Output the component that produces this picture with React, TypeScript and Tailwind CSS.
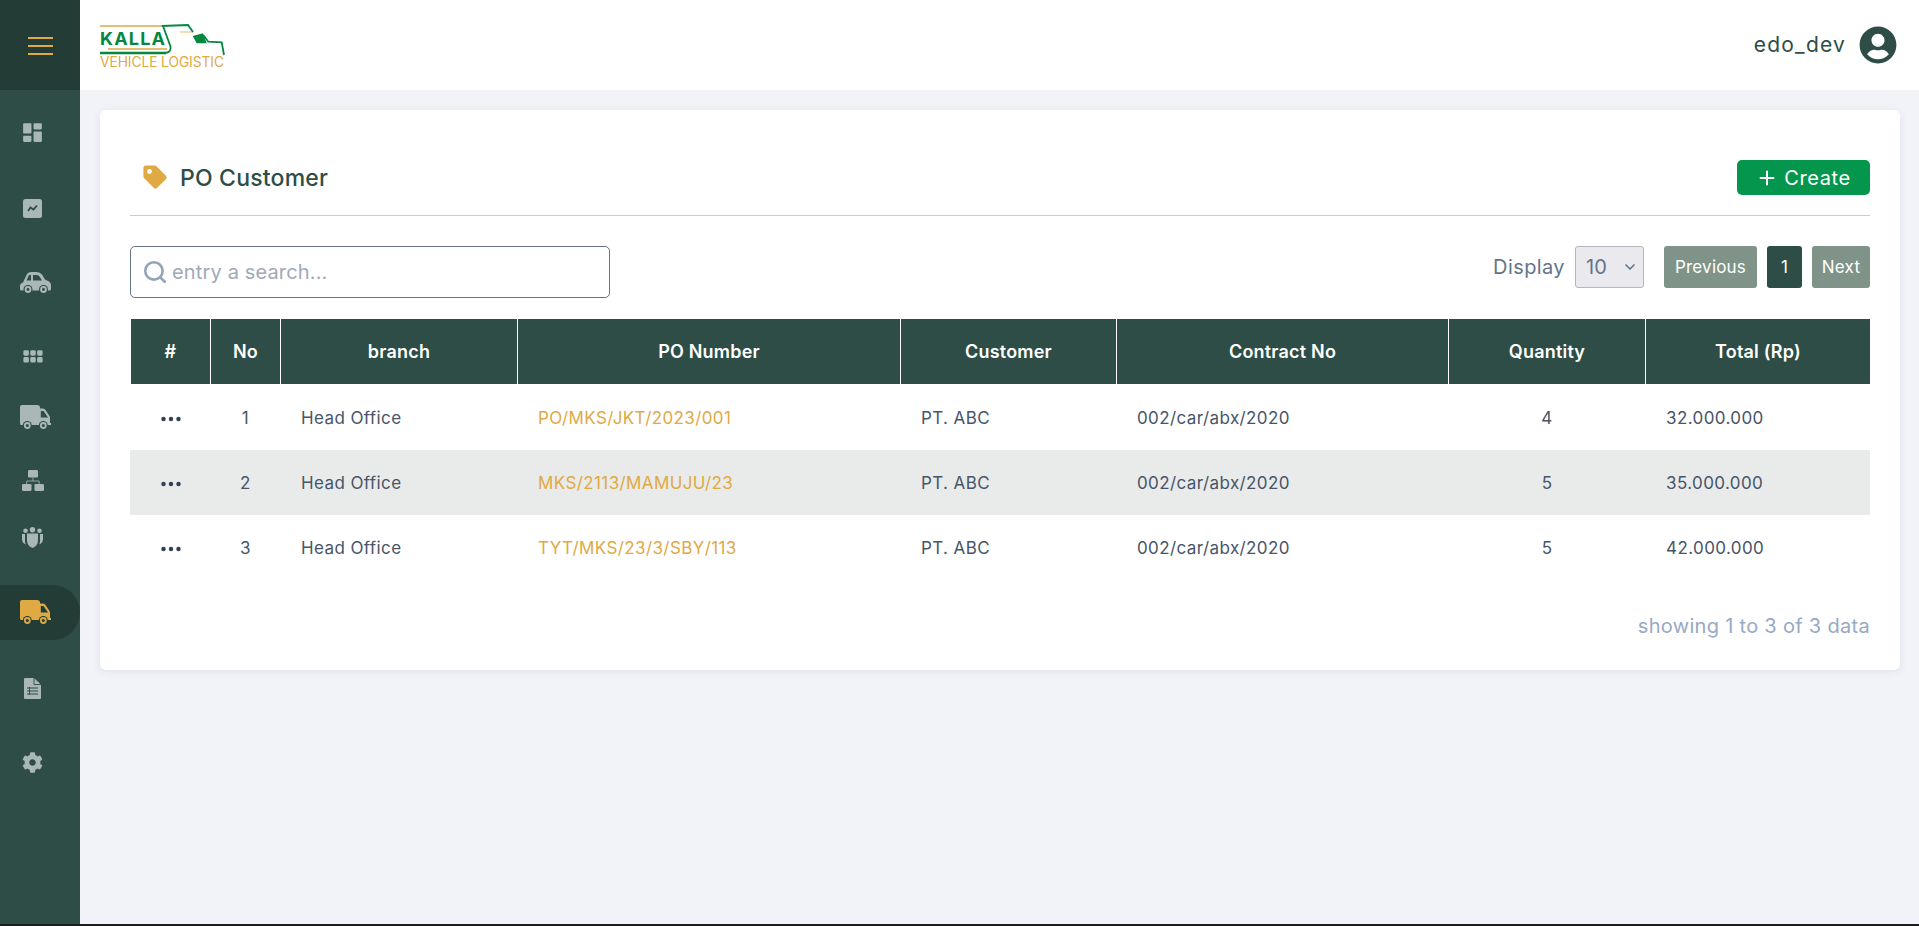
import React from 'react';
import { BiSolidPurchaseTag } from 'react-icons/bi';
import { BsGrid3X2GapFill, BsThreeDots } from 'react-icons/bs';
import { FaCog, FaUserCircle } from 'react-icons/fa';
import { RiDashboardFill } from 'react-icons/ri';
import { ChevronDown, Plus, Search } from 'lucide-react';

/* ---------------- DATA ---------------- */

const rows = [
  { no: 1, branch: 'Head Office', po: 'PO/MKS/JKT/2023/001', customer: 'PT. ABC', contract: '002/car/abx/2020', qty: 4, total: '32.000.000' },
  { no: 2, branch: 'Head Office', po: 'MKS/2113/MAMUJU/23', customer: 'PT. ABC', contract: '002/car/abx/2020', qty: 5, total: '35.000.000' },
  { no: 3, branch: 'Head Office', po: 'TYT/MKS/23/3/SBY/113', customer: 'PT. ABC', contract: '002/car/abx/2020', qty: 5, total: '42.000.000' },
];

const columns = ['#', 'No', 'branch', 'PO Number', 'Customer', 'Contract No', 'Quantity', 'Total (Rp)'];

/* ---------------- ICONS ---------------- */

function ChartIcon() {
  return (
    <svg width="19" height="19" viewBox="0 0 19 19">
      <rect width="19" height="19" rx="2.5" fill="currentColor" />
      <path d="M5 12 L7.5 8.5 L10.5 10.5 L14 6.5" fill="none" stroke="#2d4d46" strokeWidth="1.8" />
    </svg>
  );
}

function CarIcon() {
  return (
    <svg width="31" height="22" viewBox="0 0 31 22">
      <path
        d="M0 14 Q0 11.5 3 10.5 L6.5 3 Q8 0 11.5 0 H16.5 Q20 0 22 2.5 L25 7.5 L29 9.5 Q31 10.5 31 13 V17 Q31 18.5 29.5 18.5 H1.5 Q0 18.5 0 17 Z"
        fill="currentColor"
      />
      <path d="M6.5 8.5 L9 3 H11 V8.5 Z M13 3 H17 Q18.5 3 19.5 4.5 L22 8.5 H13 Z" fill="#2d4d46" />
      <circle cx="8" cy="17.5" r="4.5" fill="#2d4d46" />
      <circle cx="8" cy="17.5" r="3.4" fill="currentColor" />
      <circle cx="8" cy="17.5" r="1.4" fill="#2d4d46" />
      <circle cx="23.5" cy="17.5" r="4.5" fill="#2d4d46" />
      <circle cx="23.5" cy="17.5" r="3.4" fill="currentColor" />
      <circle cx="23.5" cy="17.5" r="1.4" fill="#2d4d46" />
    </svg>
  );
}

function TruckIcon({ bg }: { bg: string }) {
  return (
    <svg width="31" height="25" viewBox="0 0 31 25">
      <path
        d="M2 0 H17 Q20 0 20 2.5 V3.5 H23 Q24.5 3.5 25.5 5 L29.5 11 Q30 12 30 13 V18 H31 V20 H1.5 Q0 20 0 18.5 V2 Q0 0 2 0 Z"
        fill="currentColor"
      />
      <path d="M20.8 6 H23.5 L28 12.5 H20.8 Z" fill={bg} />
      <circle cx="7.3" cy="20.5" r="4.5" fill={bg} />
      <circle cx="7.3" cy="20.5" r="3.4" fill="currentColor" />
      <circle cx="7.3" cy="20.5" r="1.5" fill={bg} />
      <circle cx="23.3" cy="20.5" r="4.5" fill={bg} />
      <circle cx="23.3" cy="20.5" r="3.4" fill="currentColor" />
      <circle cx="23.3" cy="20.5" r="1.5" fill={bg} />
    </svg>
  );
}

function SitemapIcon() {
  return (
    <svg width="22" height="21" viewBox="0 0 22 21">
      <rect x="6" width="10" height="7.5" rx="1.2" fill="currentColor" />
      <rect y="14" width="9.5" height="7" rx="1.2" fill="currentColor" />
      <rect x="12.5" y="14" width="9.5" height="7" rx="1.2" fill="currentColor" />
      <path d="M11 7.5 V11 M4.7 14 V11 H17.2 V14" fill="none" stroke="currentColor" strokeWidth="0.8" />
    </svg>
  );
}

function TeamIcon() {
  return (
    <svg width="21" height="21" viewBox="0 0 21 21">
      <circle cx="3.5" cy="3.7" r="2.3" fill="currentColor" />
      <circle cx="10.5" cy="2.7" r="2.7" fill="currentColor" />
      <circle cx="17.5" cy="3.7" r="2.3" fill="currentColor" />
      <path d="M5 6.5 H16 V13 Q16 19 10.5 21 Q5 19 5 13 Z" fill="currentColor" />
      <path d="M0 7 H3 V15 L3.8 17.5 Q0 16 0 12 Z M21 7 H18 V15 L17.2 17.5 Q21 16 21 12 Z" fill="currentColor" />
    </svg>
  );
}

function FileIcon() {
  return (
    <svg width="17" height="21" viewBox="0 0 17 21">
      <path d="M1 0 H10 L17 6.5 V20 Q17 21 16 21 H1 Q0 21 0 20 V1 Q0 0 1 0 Z" fill="currentColor" />
      <path d="M10 0 V6.5 H17" fill="none" stroke="#2d4d46" strokeWidth="0.9" />
      <path d="M3 10 H14 M3 13 H14 M3 16 H14" stroke="#2d4d46" strokeWidth="1.1" />
      <path d="M5.5 9 V17" stroke="#2d4d46" strokeWidth="0.9" />
    </svg>
  );
}

function Logo() {
  return (
    <svg width="126" height="50" viewBox="0 -2 126 50" className="shrink-0">
      <path d="M0 4 H61" stroke="#dfa944" strokeWidth="1.4" />
      <path d="M8 27 H67" stroke="#dfa944" strokeWidth="1.4" />
      <path d="M80 10 H93" stroke="#dfa944" strokeWidth="0.8" />
      <path
        d="M61.5 4 L88 3 L93 10 M103.3 13 L108.3 19.7 L121.7 20.3 L124 33 M63 4 L70.5 24.5 Q71.5 30.5 65 31 H0"
        fill="none"
        stroke="#05873f"
        strokeWidth="1.8"
      />
      <path d="M0 31 H66" stroke="#05873f" strokeWidth="2.6" />
      <path d="M92.7 14 L103 11.3 L106.7 21.3 L96.7 21.3 Z" fill="#05873f" />
      <text x="0" y="22.5" fontFamily="Inter, sans-serif" fontWeight="700" fontSize="18" textLength="65" fill="#05873f">
        KALLA
      </text>
      <text x="0" y="45" fontFamily="Inter, sans-serif" fontWeight="400" fontSize="13.8" textLength="124" fill="#dfa944">
        VEHICLE LOGISTIC
      </text>
    </svg>
  );
}

const navItems = [
  { icon: <RiDashboardFill size={25} />, className: 'mt-[15px] pr-[15px]' },
  { icon: <ChartIcon />, className: 'mt-[21px] pr-[15px]' },
  { icon: <CarIcon />, className: 'mt-[19px] pr-[10px]' },
  { icon: <BsGrid3X2GapFill size={22} />, className: 'mt-[19px] pr-[15px]' },
  { icon: <TruckIcon bg="#2d4d46" />, className: 'mt-[6px] pr-[10px]' },
  { icon: <SitemapIcon />, className: 'mt-[8px] pr-[15px]' },
  { icon: <TeamIcon />, className: 'mt-[2px] pr-[15px]' },
  { icon: <TruckIcon bg="#233d36" />, className: 'mt-[20px] pr-[10px]', active: true },
  { icon: <FileIcon />, className: 'mt-[21px] pr-[15px]' },
  { icon: <FaCog size={21} />, className: 'mt-[19px] pr-[15px]' },
];

/* ---------------- MAIN ---------------- */

export default function App() {
  return (
    <div className="flex flex-col h-[926px] overflow-hidden bg-[#f1f3f8] font-['Inter',sans-serif]">
      <div className="flex flex-1 min-h-0">
        {/* Sidebar */}
        <aside className="w-[80px] shrink-0 bg-[#2d4d46]">
          <div className="h-[90px] pt-[2px] bg-[#233d36] flex items-center justify-center">
            <div className="w-[25px] flex flex-col gap-[6px]">
              <div className="h-[2px] bg-[#dfa944]" />
              <div className="h-[2px] bg-[#dfa944]" />
              <div className="h-[2px] bg-[#dfa944]" />
            </div>
          </div>
          <nav className="flex flex-col">
            {navItems.map((item, i) => (
              <div
                key={i}
                className={`h-[55px] flex items-center justify-center ${item.className} ${
                  item.active ? 'bg-[#233d36] rounded-r-[28px] text-[#dfa944]' : 'text-[#a9b8b5]'
                }`}
              >
                {item.icon}
              </div>
            ))}
          </nav>
        </aside>

        <div className="flex-1 min-w-0 flex flex-col">
          {/* Header */}
          <header className="h-[90px] bg-white flex items-center justify-between pl-[20px] pr-[22px]">
            <Logo />
            <div className="flex items-center gap-[13px]">
              <span className="text-[21px] tracking-[1.2px] text-[#2d4d46]">edo_dev</span>
              <FaUserCircle size={38} className="text-[#2d4d46]" />
            </div>
          </header>

          {/* Card */}
          <main className="pl-[20px] pr-[19px] py-[20px]">
            <div className="h-[560px] bg-white rounded-[6px] shadow-[0_2px_8px_rgba(40,50,80,0.08)] px-[30px] pt-[50px]">
              <div className="flex items-center justify-between h-[35px]">
                <div className="flex items-center gap-[10px] pl-[11px]">
                  <BiSolidPurchaseTag size={29} className="text-[#dfa944]" />
                  <h1 className="pt-[2px] text-[23px] tracking-[0.2px] font-medium text-[#2d4d46]">PO Customer</h1>
                </div>
                <button className="w-[133px] h-[35px] rounded-[5px] bg-[#05964d] text-white text-[20px] tracking-[0.6px] flex items-center justify-center gap-[6px]">
                  <Plus size={22} strokeWidth={2.2} />
                  Create
                </button>
              </div>
              <div className="mt-[20px] h-px bg-[#c9cbcd]" />

              {/* Toolbar */}
              <div className="mt-[30px] flex items-start justify-between">
                <div className="w-[480px] h-[52px] border border-[#64748b] rounded-[5px] flex items-center gap-[4px] pl-[11px]">
                  <Search size={26} strokeWidth={2.4} className="text-[#94a3b8]" />
                  <input
                    placeholder="entry a search..."
                    className="flex-1 outline-none text-[20px] tracking-[0.15px] text-[#475569] placeholder:text-[#a0a9b8]"
                  />
                </div>
                <div className="flex items-center">
                  <span className="text-[20px] tracking-[0.4px] text-[#64748b] mr-[10px]">Display</span>
                  <div className="w-[69px] h-[42px] border border-[#b2b6bd] rounded-[3px] bg-[#e9e9ee] flex items-center justify-between pl-[10px] pr-[5px] text-[20px] text-[#64748b] mr-[20px]">
                    10
                    <ChevronDown size={16} strokeWidth={2.5} />
                  </div>
                  <button className="w-[93px] h-[42px] pt-[1px] rounded-[3px] bg-[#809389] text-white text-[17px] tracking-[0.2px]">Previous</button>
                  <button className="w-[35px] h-[42px] pt-[1px] rounded-[3px] bg-[#2d4d46] text-white text-[17px] mx-[10px]">1</button>
                  <button className="w-[58px] h-[42px] pt-[1px] rounded-[3px] bg-[#809389] text-white text-[17px] tracking-[0.2px]">Next</button>
                </div>
              </div>

              {/* Table */}
              <table className="mt-[21px] w-[1740px] table-fixed border-separate border-spacing-0 text-[17px] tracking-[0.4px] text-[#475569]">
                <colgroup>
                  <col className="w-[80px]" />
                  <col className="w-[70px]" />
                  <col className="w-[237px]" />
                  <col className="w-[383px]" />
                  <col className="w-[216px]" />
                  <col className="w-[332px]" />
                  <col className="w-[197px]" />
                  <col className="w-[225px]" />
                </colgroup>
                <thead>
                  <tr className="h-[66px] text-white">
                    {columns.map((c) => (
                      <th key={c} className="bg-[#2d4d46] border-l border-b border-white font-semibold text-[18px] tracking-[0.2px] text-center">
                        {c}
                      </th>
                    ))}
                  </tr>
                </thead>
                <tbody className="[&_td]:pt-[2px] [&_td]:border-l [&_td]:border-transparent">
                  {rows.map((row) => (
                    <tr key={row.no} className="h-[65px] even:bg-[#e9ebea]">
                      <td className="text-center">
                        <BsThreeDots size={24} className="inline text-[#334155]" />
                      </td>
                      <td className="text-center">{row.no}</td>
                      <td className="pl-[20px]">{row.branch}</td>
                      <td className="pl-[20px] text-[#dfa944]">{row.po}</td>
                      <td className="pl-[20px]">{row.customer}</td>
                      <td className="pl-[20px]">{row.contract}</td>
                      <td className="text-center">{row.qty}</td>
                      <td className="pl-[20px]">{row.total}</td>
                    </tr>
                  ))}
                </tbody>
              </table>

              <p className="mt-[31px] text-right text-[20px] tracking-[0.3px] text-[#98a9c4]">showing 1 to 3 of 3 data</p>
            </div>
          </main>
        </div>
      </div>
      <div className="h-[2px] shrink-0 bg-[#1c1c1c]" />
    </div>
  );
}
